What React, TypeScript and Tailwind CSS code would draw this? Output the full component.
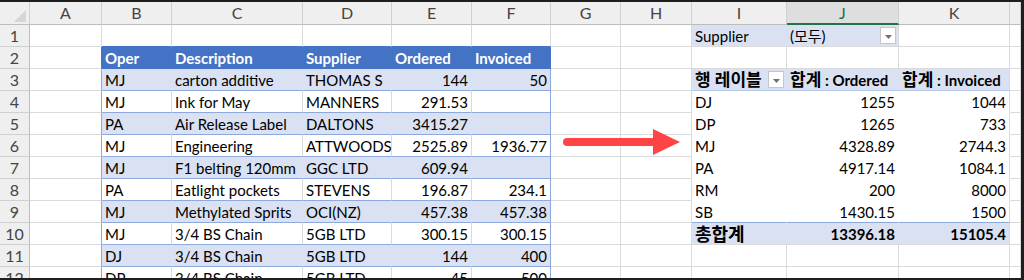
import React from 'react';
import clsx from 'clsx';

// Worksheet: source table in B2:F12, pivot table in I1:K10

type Cell = {
  text?: React.ReactNode;
  right?: boolean;
  bold?: boolean;
  fill?: string;
  br?: string;
  bb?: string;
  color?: string;
  btn?: boolean;
};

const LETTERS = ['A', 'B', 'C', 'D', 'E', 'F', 'G', 'H', 'I', 'J', 'K', ''];

const source: string[][] = [
  ['Oper', 'Description', 'Supplier', 'Ordered', 'Invoiced'],
  ['MJ', 'carton additive', 'THOMAS S', '144', '50'],
  ['MJ', 'Ink for May', 'MANNERS', '291.53', ''],
  ['PA', 'Air Release Label', 'DALTONS', '3415.27', ''],
  ['MJ', 'Engineering', 'ATTWOODS', '2525.89', '1936.77'],
  ['MJ', 'F1 belting 120mm', 'GGC LTD', '609.94', ''],
  ['PA', 'Eatlight pockets', 'STEVENS', '196.87', '234.1'],
  ['MJ', 'Methylated Sprits', 'OCI(NZ)', '457.38', '457.38'],
  ['MJ', '3/4 BS Chain', '5GB LTD', '300.15', '300.15'],
  ['DJ', '3/4 BS Chain', '5GB LTD', '144', '400'],
  ['DP', '3/4 BS Chain', '5GB LTD', '45', '500'],
];

const pivotRows: [string, string, string][] = [
  ['DJ', '1255', '1044'],
  ['DP', '1265', '733'],
  ['MJ', '4328.89', '2744.3'],
  ['PA', '4917.14', '1084.1'],
  ['RM', '200', '8000'],
  ['SB', '1430.15', '1500'],
];

function buildRow(r: number): Cell[] {
  const row: Cell[] = LETTERS.map(() => ({}));

  // source table, columns B..F
  if (r === 1) {
    for (let c = 1; c <= 5; c++) row[c].bb = 'border-b-[#4472c4]';
  }
  if (r >= 2) {
    const vals = source[r - 2];
    const header = r === 2;
    const band = !header && r % 2 === 1;
    row[0].br = header ? 'border-r-[#4472c4]' : 'border-r-[#8ea9db]';
    for (let c = 1; c <= 5; c++) {
      const cell = row[c];
      cell.text = vals[c - 1];
      cell.right = !header && c >= 4;
      if (header) {
        cell.fill = 'bg-[#4472c4]';
        cell.color = 'text-white';
        cell.bold = true;
        cell.br = 'border-r-[#4472c4]';
        cell.bb = 'border-b-[#4472c4]';
      } else {
        cell.fill = band ? 'bg-[#d9e1f2]' : 'bg-white';
        cell.br = band ? 'border-r-[#d9e1f2]' : 'border-r-[#dadada]';
        cell.bb = 'border-b-[#8ea9db]';
      }
    }
    row[5].br = header ? 'border-r-[#4472c4]' : 'border-r-[#8ea9db]';
  }

  // pivot table, columns I..K
  const [I, J, K] = [8, 9, 10];
  if (r === 1) {
    row[I] = { text: 'Supplier', fill: 'bg-[#d9e1f2]', br: 'border-r-[#d9e1f2]' };
    row[J] = { text: '(모두)', fill: 'bg-[#d9e1f2]', btn: true };
  }
  if (r === 3) {
    row[I] = { text: <span className="text-[17px]">행 레이블</span>, bold: true, btn: true, fill: 'bg-[#d9e1f2]', br: 'border-r-[#d9e1f2]', bb: 'border-b-[#b4c6e7]' };
    row[J] = {
      text: (
        <>
          <span className="text-[17px]">합계</span> : Ordered
        </>
      ),
      bold: true,
      fill: 'bg-[#d9e1f2]',
      br: 'border-r-[#d9e1f2]',
      bb: 'border-b-[#b4c6e7]',
    };
    row[K] = {
      text: (
        <>
          <span className="text-[17px]">합계</span> : Invoiced
        </>
      ),
      bold: true,
      fill: 'bg-[#d9e1f2]',
      bb: 'border-b-[#b4c6e7]',
    };
  }
  if (r >= 4 && r <= 9) {
    const [label, ord, inv] = pivotRows[r - 4];
    const bb = r === 9 ? 'border-b-[#8ea9db]' : 'border-b-white';
    row[I] = { text: label, br: 'border-r-white', bb };
    row[J] = { text: ord, right: true, br: 'border-r-white', bb };
    row[K] = { text: inv, right: true, bb };
  }
  if (r === 10) {
    row[I] = { text: <span className="text-[18px]">총합계</span>, bold: true, fill: 'bg-[#d9e1f2]', br: 'border-r-[#d9e1f2]' };
    row[J] = { text: '13396.18', bold: true, right: true, fill: 'bg-[#d9e1f2]', br: 'border-r-[#d9e1f2]' };
    row[K] = { text: '15105.4', bold: true, right: true, fill: 'bg-[#d9e1f2]' };
  }
  return row;
}

function DropButton() {
  return (
    <span className="flex h-[17px] w-[16px] shrink-0 items-center justify-center border border-[#c6c6c6] bg-white">
      <svg width="7" height="4" viewBox="0 0 7 4" className="mt-[2px]">
        <path d="M0 0 L7 0 L3.5 4 Z" fill="#707070" />
      </svg>
    </span>
  );
}

function CellView({ c }: { c: Cell }) {
  return (
    <div
      className={clsx(
        'flex items-center overflow-hidden whitespace-nowrap border-r border-b',
        c.fill ?? 'bg-white',
        c.br ?? 'border-r-[#dadada]',
        c.bb ?? 'border-b-[#dadada]',
        c.color ?? 'text-black',
        c.bold && 'font-bold',
        c.btn ? 'justify-between pl-[3px] pr-[2px]' : c.right ? 'justify-end pr-[3px]' : 'pl-[3px]'
      )}
    >
      <span className="pt-[1px]">{c.text}</span>
      {c.btn && <DropButton />}
    </div>
  );
}

export default function App() {
  const rows = Array.from({ length: 12 }, (_, i) => i + 1);

  return (
    <div className="h-[280px] w-[1024px] overflow-hidden border-t-2 border-r-[3px] border-b-2 border-[#1e1e1e] bg-white font-['Lato','Noto_Sans_CJK_KR',sans-serif] text-[15px] leading-[20px]">
      <div className="relative h-[276px] overflow-hidden">
        <div className="grid grid-cols-[30px_72px_70px_131px_89px_80px_79px_70px_71px_95px_112px_111px_11px] grid-rows-[23px_repeat(12,22px)]">
          {/* column headers */}
          <div className="relative border-r border-b border-r-[#d0d0d0] border-b-[#bdbdbd] bg-[#efefef]">
            <svg width="12" height="12" viewBox="0 0 12 12" className="absolute right-[3px] bottom-[2px]">
              <path d="M12 0 L12 12 L0 12 Z" fill="#d6d6d6" />
            </svg>
          </div>
          {LETTERS.map((l, i) =>
            l === 'J' ? (
              <div
                key={i}
                className="flex items-center justify-center border-r border-b-2 border-r-[#d0d0d0] border-b-[#217346] bg-[#dedede] text-[16px] text-[#217346]"
              >
                {l}
              </div>
            ) : (
              <div
                key={i}
                className="flex items-center justify-center border-r border-b border-r-[#d0d0d0] border-b-[#bdbdbd] bg-[#efefef] text-[16px] text-[#444]"
              >
                {l}
              </div>
            )
          )}

          {rows.map((r) => (
            <React.Fragment key={r}>
              <div className="flex items-center justify-center border-r border-b border-r-[#bdbdbd] border-b-[#d0d0d0] bg-[#efefef] text-[16px] text-[#444]">
                {r}
              </div>
              {buildRow(r).map((c, i) => (
                <CellView key={i} c={c} />
              ))}
            </React.Fragment>
          ))}
        </div>

        {/* red arrow pointing from the source table to the pivot */}
        <svg width="122" height="30" viewBox="0 0 122 30" className="absolute left-[561px] top-[124px]">
          <line x1="6" y1="16" x2="96" y2="16" stroke="#fe4444" strokeWidth="8" strokeLinecap="round" />
          <path d="M92 3 L119 16 L92 29 Z" fill="#fe4444" />
        </svg>
      </div>
    </div>
  );
}
